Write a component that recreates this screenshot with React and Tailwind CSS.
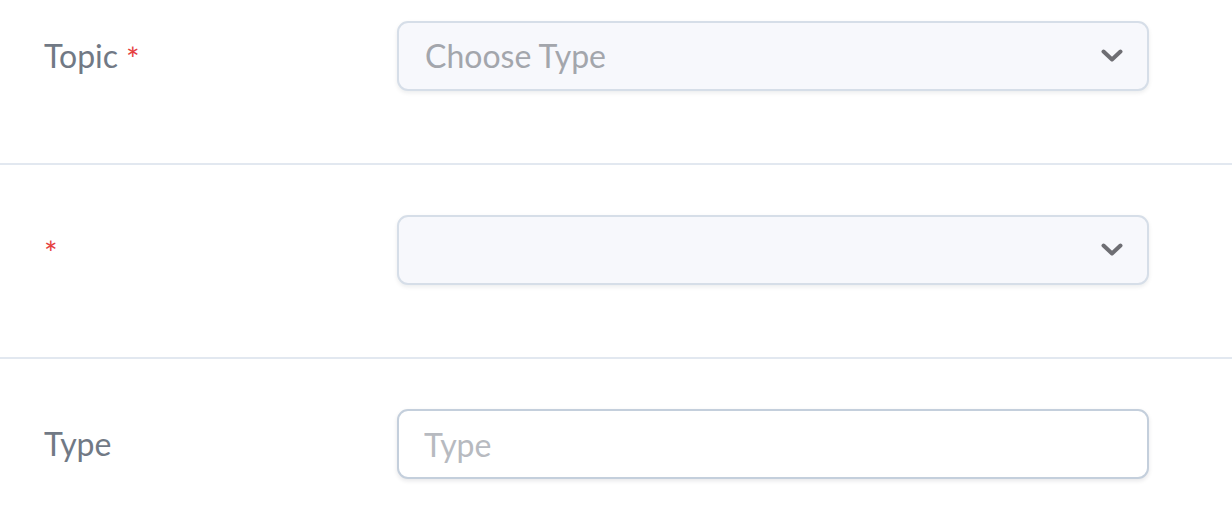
function Chevron() {
  return (
    <svg width="22" height="14" viewBox="0 0 22 14" fill="none" className="shrink-0" aria-hidden>
      <path d="M2.5 2.5 L11 10.5 L19.5 2.5" stroke="#6e6e73" strokeWidth="4" strokeLinecap="round" strokeLinejoin="round" />
    </svg>
  )
}

function Row({ label, required, last, children }) {
  return (
    <div className={`grid grid-cols-[353px_752px] items-center px-[44px] pt-[50px] pb-[72px] ${last ? '' : 'border-b-2 border-[#e2e8f0]'}`}>
      <label className="flex items-center text-[32px] leading-none text-[#717985]">
        {label}
        {required ? <span className={`${label ? 'ml-[8px]' : ''} text-[32px] text-[#e53e3e] translate-y-[3px]`}>*</span> : null}
      </label>
      {children}
    </div>
  )
}

function SelectBox({ placeholder }) {
  return (
    <div className="flex h-[70px] items-center justify-between rounded-[11px] border-2 border-[#d6dee8] bg-[#f7f8fc] pl-[26px] pr-[24px] shadow-[0_2px_4px_rgba(15,23,42,0.08)]">
      <span className="text-[32px] leading-none text-[#a3a6ac]">{placeholder}</span>
      <Chevron />
    </div>
  )
}

export default function App() {
  return (
    <div className="min-h-screen overflow-hidden bg-white" style={{ fontFamily: 'Lato, "Noto Sans", sans-serif' }}>
      <div className="-mt-[29px]">
        <Row label="Topic" required>
          <SelectBox placeholder="Choose Type" />
        </Row>
        <Row label="" required>
          <SelectBox placeholder="" />
        </Row>
        <Row label="Type" last>
          <input
            type="text"
            placeholder="Type"
            className="h-[70px] w-full rounded-[11px] border-2 border-[#c4cfdc] bg-white px-[25px] text-[32px] text-[#4a5568] shadow-[0_2px_4px_rgba(15,23,42,0.1)] outline-none placeholder:text-[#b7bac0]"
          />
        </Row>
      </div>
    </div>
  )
}
